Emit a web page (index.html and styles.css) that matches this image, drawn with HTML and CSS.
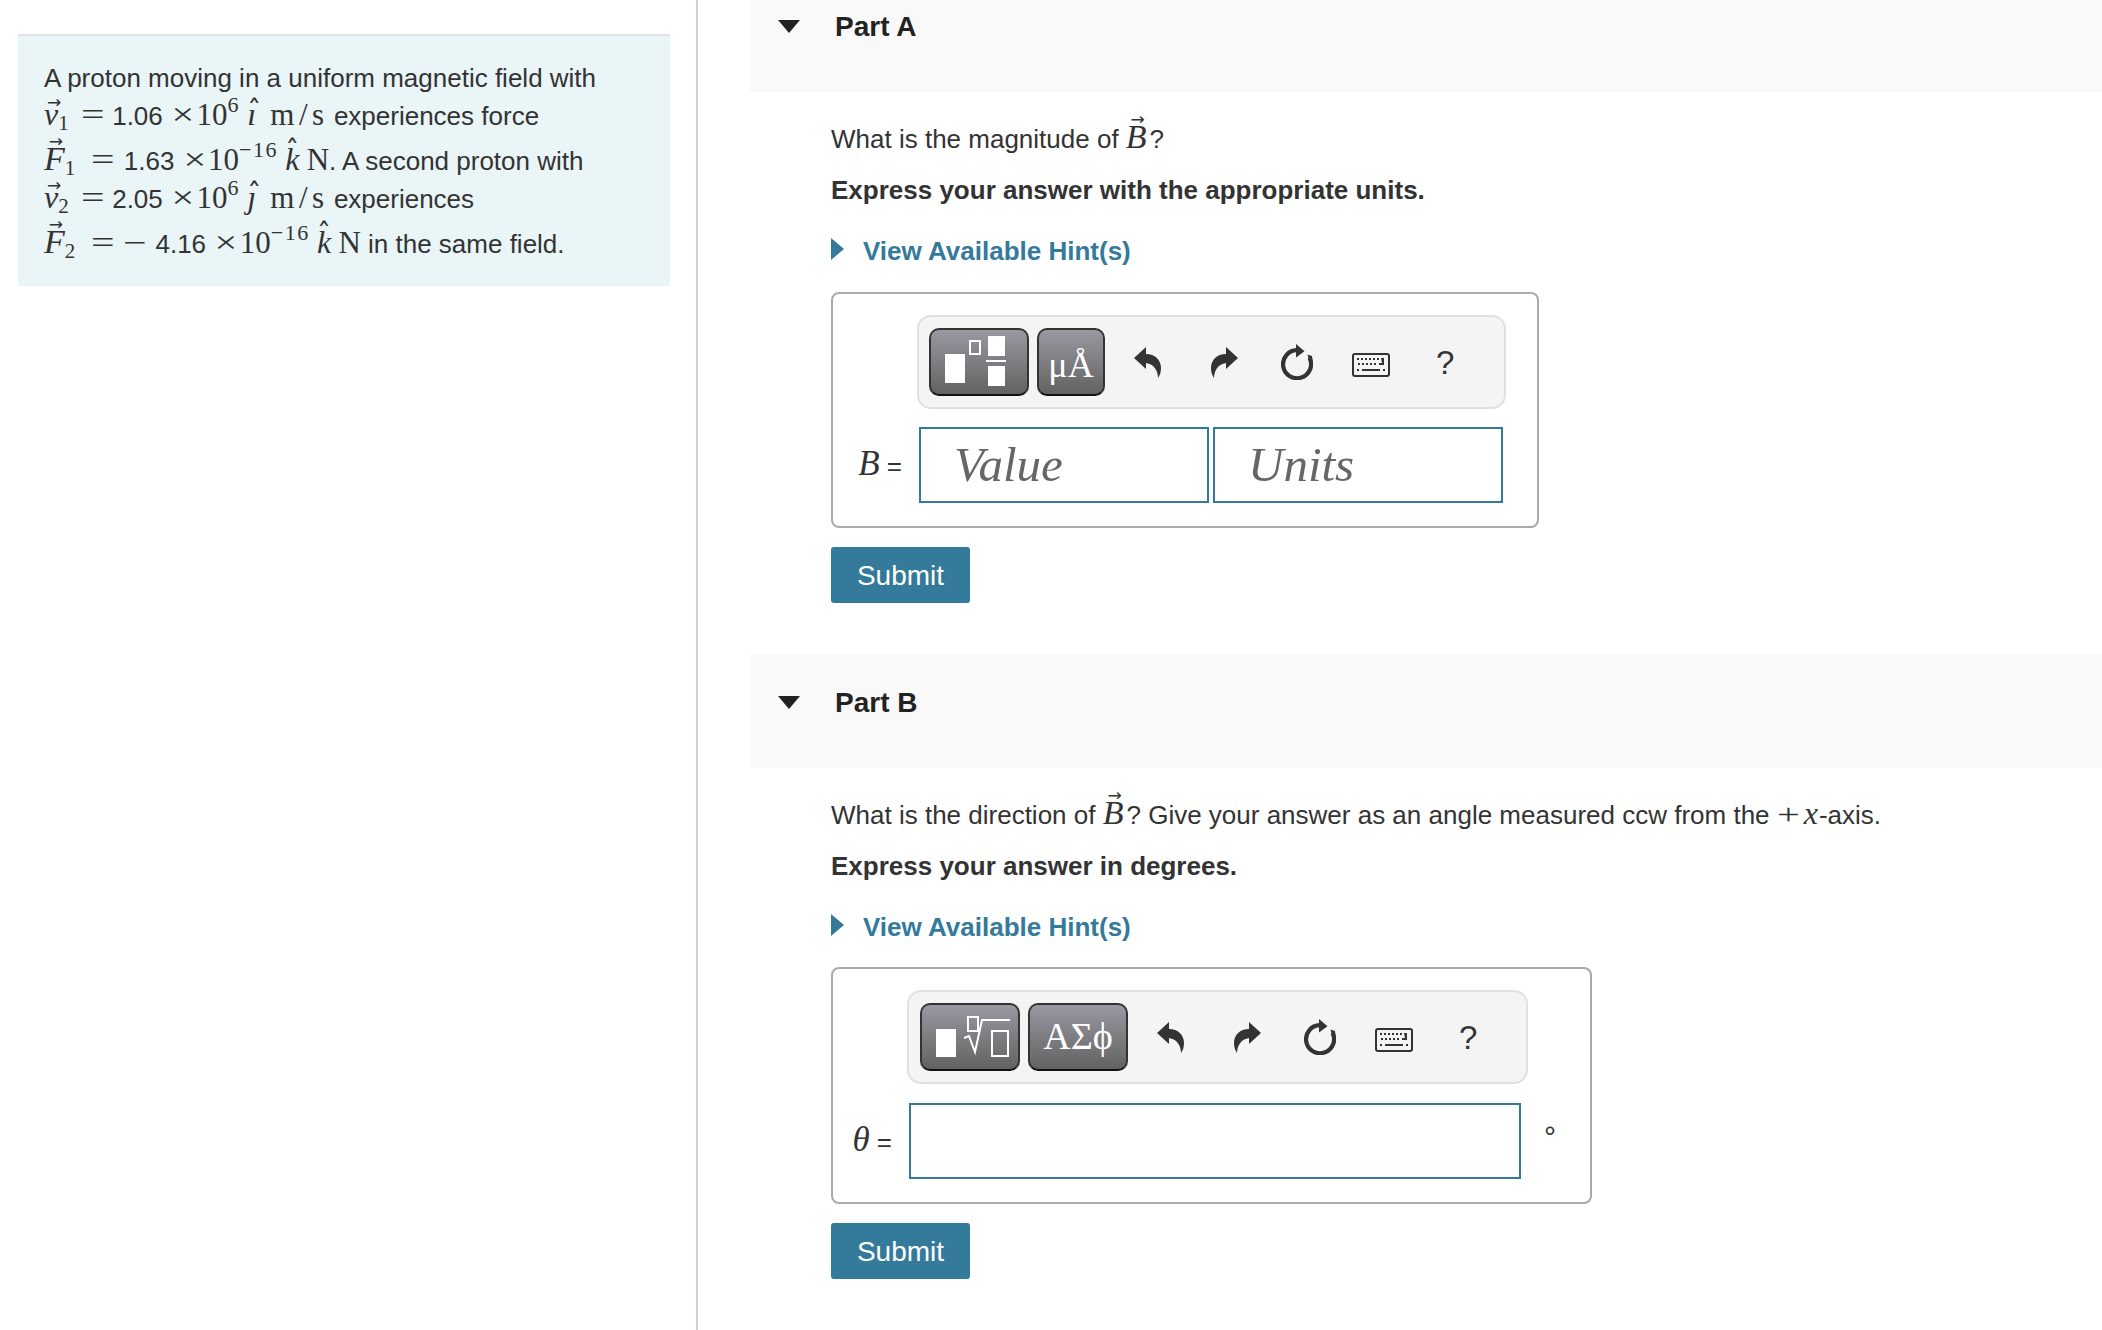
FILE: index.html
```html
<!DOCTYPE html>
<html lang="en">
<head>
<meta charset="utf-8">
<title>Proton in a magnetic field</title>
<link rel="stylesheet" href="styles.css">
</head>
<body>
<svg class="defs" width="0" height="0" aria-hidden="true">
  <symbol id="i-undo" viewBox="0 0 27 31"><path d="M0 11 12 0V7C21 7 27 13 27 21 27 25 26 28 24 31 24 24 20 17 12 16V22Z"/></symbol>
  <symbol id="i-redo" viewBox="0 0 27 31"><path d="M27 11 15 0V7C6 7 0 13 0 21 0 25 1 28 3 31 3 24 7 17 15 16V22Z"/></symbol>
  <symbol id="i-reload" viewBox="0 0 32 36"><path d="M28.6 14A14 14 0 1 1 15.7 6.2" fill="none" stroke="#333" stroke-width="4.2"/><path d="M15 0 23.5 7.2 15 13.5Z"/><path d="M26.5 10.5 31 12 31.8 18 28 17Z"/></symbol>
  <symbol id="i-keys" viewBox="0 0 38 24">
    <rect x="1" y="1" width="36" height="22" rx="2" fill="#f4f4f4" stroke="#333" stroke-width="2"/>
    <path d="M5 5h2v2H5zM9 5h2v2H9zM13 5h2v2h-2zM17 5h2v2h-2zM21 5h2v2h-2zM25 5h2v2h-2zM29 5h3v7h-5v-2h3zM6 10h2v2H6zM10 10h2v2h-2zM14 10h2v2h-2zM18 10h2v2h-2zM22 10h2v2h-2zM5 16h2v2H5zM10 16h18v2H10zM31 16h2v2h-2z" fill="#333"/>
  </symbol>
</svg>
<div class="page">
  <aside class="left">
    <div class="stem">
      <div class="line first">A proton moving in a uniform magnetic field with</div>
      <div class="line"><span class="acc vec vec-low mi">v</span><sub>1</sub><span class="op">=</span>1.06 <span class="times">×</span><span class="sf">10<sup>6</sup></span> <span class="acc hat hat-low mi">ı</span> <span class="sf units">m/s</span> experiences force</div>
      <div class="line tall"><span class="acc vec mi cap">F</span><sub>1</sub><span class="op wide">=</span>1.63 <span class="times">×</span><span class="sf">10<sup>−16</sup></span> <span class="acc hat mi">k</span> <span class="sf">N</span>. A second proton with</div>
      <div class="line"><span class="acc vec vec-low mi">v</span><sub>2</sub><span class="op">=</span>2.05 <span class="times">×</span><span class="sf">10<sup>6</sup></span> <span class="acc hat hat-low mi">ȷ</span> <span class="sf units">m/s</span> experiences</div>
      <div class="line tall"><span class="acc vec mi cap">F</span><sub>2</sub><span class="op wide">=</span><span class="op minus">−</span> 4.16 <span class="times">×</span><span class="sf">10<sup>−16</sup></span> <span class="acc hat mi">k</span> <span class="sf">N</span> in the same field.</div>
    </div>
  </aside>
  <main class="right">
    <section class="part">
      <header class="part-head"><span class="tri-down"></span><h2>Part A</h2></header>
      <div class="part-body">
        <p class="q">What is the magnitude of <span class="acc vec mi cap q-b">B</span>?</p>
        <p class="ins">Express your answer with the appropriate units.</p>
        <p class="hint"><span class="tri-right"></span>View Available Hint(s)</p>
        <div class="answer answer-a">
          <div class="toolbar tb-a">
            <div class="btn btn-wide">
              <svg width="96" height="64" viewBox="0 0 96 64"><rect x="14" y="24" width="20" height="29" fill="#fff"/><rect x="39" y="11" width="10" height="13" fill="none" stroke="#fff" stroke-width="2"/><rect x="57" y="6" width="17" height="20" fill="#fff"/><rect x="55" y="30" width="20" height="2" fill="#fff"/><rect x="57" y="36" width="17" height="20" fill="#fff"/></svg>
            </div>
            <div class="btn btn-unit"><span class="btn-sym sym-unit">μÅ</span></div>
            <div class="tools">
              <svg class="ic ic-undo"><use href="#i-undo"/></svg>
              <svg class="ic ic-undo"><use href="#i-redo"/></svg>
              <svg class="ic ic-reload"><use href="#i-reload"/></svg>
              <svg class="ic ic-keys"><use href="#i-keys"/></svg>
              <span class="help">?</span>
            </div>
          </div>
          <div class="inputs">
            <label class="lbl"><span class="mi">B</span> =</label>
            <input class="field field-half" placeholder="Value">
            <input class="field field-half" placeholder="Units">
          </div>
        </div>
        <button class="submit">Submit</button>
      </div>
    </section>
    <section class="part part-b">
      <header class="part-head head-b"><span class="tri-down"></span><h2>Part B</h2></header>
      <div class="part-body">
        <p class="q">What is the direction of <span class="acc vec mi cap q-b">B</span>? Give your answer as an angle measured ccw from the <span class="plus">+</span><span class="mi mi-x">x</span>-axis.</p>
        <p class="ins">Express your answer in degrees.</p>
        <p class="hint"><span class="tri-right"></span>View Available Hint(s)</p>
        <div class="answer answer-b">
          <div class="toolbar tb-b">
            <div class="btn btn-wide">
              <svg width="96" height="64" viewBox="0 0 96 64"><rect x="14" y="24" width="20" height="28" fill="#fff"/><rect x="46" y="12" width="10" height="14" fill="none" stroke="#fff" stroke-width="2"/><path d="M42 33 47 31 53 47 60 15H88" fill="none" stroke="#fff" stroke-width="2"/><rect x="70" y="26" width="16" height="25" fill="none" stroke="#fff" stroke-width="2"/></svg>
            </div>
            <div class="btn btn-wide"><span class="btn-sym sym-greek">ΑΣϕ</span></div>
            <div class="tools">
              <svg class="ic ic-undo"><use href="#i-undo"/></svg>
              <svg class="ic ic-undo"><use href="#i-redo"/></svg>
              <svg class="ic ic-reload"><use href="#i-reload"/></svg>
              <svg class="ic ic-keys"><use href="#i-keys"/></svg>
              <span class="help">?</span>
            </div>
          </div>
          <div class="inputs">
            <label class="lbl"><span class="mi">θ</span> =</label>
            <input class="field field-full">
            <span class="deg">°</span>
          </div>
        </div>
        <button class="submit">Submit</button>
      </div>
    </section>
  </main>
</div>
</body>
</html>
```

FILE: styles.css
```css
* { box-sizing: border-box; }
html, body { margin: 0; height: 100%; }
body { background: #fff; color: #333; font-family: "Liberation Sans", Arial, sans-serif; font-size: 26px; overflow: hidden; }
.defs { position: absolute; }
.page { display: flex; height: 1330px; }

.left { width: 698px; flex: none; border-right: 2px solid #c5d2e0; padding: 34px 0 0 18px; }
.stem { width: 652px; height: 252px; background: #e9f5f7; border-top: 2px solid #dfe5e6; padding: 24px 0 0 26px; }
.line { height: 37px; line-height: 35px; white-space: nowrap; }
.line.first { line-height: 37px; }
.line.tall { height: 46px; line-height: 52px; }

.mi { font-family: "Liberation Serif", serif; font-style: italic; }
.sf { font-family: "Liberation Serif", serif; font-size: 31px; }
.units { letter-spacing: 4.5px; margin: 0 -2px 0 7px; }
.cap { font-size: 34px; }
.op { display: inline-block; transform: scaleX(1.35); font-family: "Liberation Serif", serif; font-size: 31px; line-height: 1; margin: 0 11px 0 15px; }
.op.wide { margin: 0 12px 0 19px; }
.op.minus { margin: 0 5px 0 2px; }
.times { display: inline-block; transform: scaleX(1.3); font-family: "Liberation Serif", serif; font-size: 31px; line-height: 1; margin: 0 5px 0 4px; }
.plus { display: inline-block; transform: scaleX(1.35); font-family: "Liberation Serif", serif; font-size: 30px; line-height: 1; margin: 0 7px 0 3px; }
.mi-x { font-size: 32px; margin-right: 1px; }
sub { font-family: "Liberation Serif", serif; font-size: 21px; line-height: 0; vertical-align: -5px; }
sup { font-size: 22px; letter-spacing: 1.5px; line-height: 0; vertical-align: 13px; }
.acc { display: inline-block; position: relative; line-height: 1; font-size: 32px; }
.acc.cap { font-size: 34px; }
.q-b { margin-right: 3px; }
.acc::before { position: absolute; left: 0; right: 0; text-align: center; font-style: normal; font-family: "DejaVu Sans", sans-serif; }
.vec::before { content: "→"; top: -9px; font-size: 17px; padding-left: 3px; }
.vec-low::before { top: -4px; }
.hat::before { content: "ˆ"; top: -5px; font-size: 28px; }
.hat-low::before { top: 0; }

.right { flex: 1; padding-left: 52px; min-width: 0; }
.part-head { height: 92px; background: #f9f9f9; display: flex; align-items: flex-start; padding: 11px 0 0 28px; }
.head-b { height: 113px; padding-top: 32px; }
.part-b { margin-top: 52px; }
.part-head h2 { margin: 0 0 0 35px; font-size: 28px; line-height: 32px; font-weight: 700; color: #222; }
.tri-down { width: 0; height: 0; margin-top: 9px; border-left: 11px solid transparent; border-right: 11px solid transparent; border-top: 13px solid #222; }
.part-body { padding: 24px 0 0 81px; }
.q { margin: 0; height: 44px; line-height: 46px; white-space: nowrap; }
.part-b .q { line-height: 42px; }
.ins { margin: 8px 0 0; height: 44px; line-height: 44px; font-weight: 700; }
.hint { margin: 21px 0 0; height: 36px; line-height: 36px; font-weight: 700; color: #337a9b; display: flex; align-items: center; }
.tri-right { width: 0; height: 0; margin-right: 19px; margin-top: -4px; border-top: 11px solid transparent; border-bottom: 11px solid transparent; border-left: 13px solid #337a9b; }

.answer { margin-top: 23px; border: 2px solid #aaa; border-radius: 8px; height: 236px; }
.answer-a { width: 708px; padding: 21px 0 0 84px; }
.answer-b { width: 761px; height: 237px; margin-top: 22px; padding: 21px 0 0 74px; }
.toolbar { height: 94px; background: #f4f4f4; border: 2px solid #e0e0e0; border-radius: 14px; display: flex; align-items: center; padding: 0 0 0 10px; gap: 8px; }
.tb-a { width: 589px; }
.tb-b { width: 621px; padding-left: 11px; }
.btn { height: 68px; border: 2px solid #333; border-bottom-color: #111; border-radius: 10px; background: linear-gradient(#9a98a1, #626262); color: #fff; display: flex; align-items: center; justify-content: center; font-family: "Liberation Serif", serif; flex: none; }
.btn-wide { width: 100px; }
.btn-unit { width: 68px; }
.btn-sym { font-size: 38px; line-height: 1; }
.sym-unit { font-size: 36px; padding-top: 6px; }
.sym-greek { padding-bottom: 3px; }
.tools { display: flex; align-items: center; height: 100%; margin-left: 21px; }
.ic { fill: #333; display: block; flex: none; }
.ic-undo { width: 27px; height: 31px; margin-right: 50px; }
.ic-reload { width: 32px; height: 36px; margin: 0 39px 0 -7px; }
.ic-keys { width: 38px; height: 24px; margin: 6px 46px 0 0; }
.help { font-size: 33px; line-height: 1; color: #333; }

.inputs { display: flex; align-items: center; margin: 18px 0 0 2px; position: relative; }
.answer-b .inputs { margin-top: 19px; }
.lbl { position: absolute; right: 100%; margin-right: 17px; margin-top: -2px; white-space: nowrap; font-size: 26px; }
.lbl .mi { font-size: 35px; line-height: 1; }
.field { height: 76px; border: 2px solid #337a9b; background: #fff; border-radius: 0; outline: none; padding: 0 0 2px 33px; font-family: "Liberation Serif", serif; font-style: italic; font-size: 49px; margin: 0; }
.field::placeholder { color: #666; opacity: 1; }
.field-half { width: 290px; margin-right: 4px; }
.field-full { width: 612px; }
.deg { margin-left: 23px; margin-top: -8px; font-size: 30px; line-height: 1; }

.submit { display: block; margin-top: 19px; width: 139px; height: 56px; background: #337a9b; color: #fff; border: 0; border-radius: 3px; font-family: "Liberation Sans", sans-serif; font-size: 28px; padding: 2px 0 0; }
```
